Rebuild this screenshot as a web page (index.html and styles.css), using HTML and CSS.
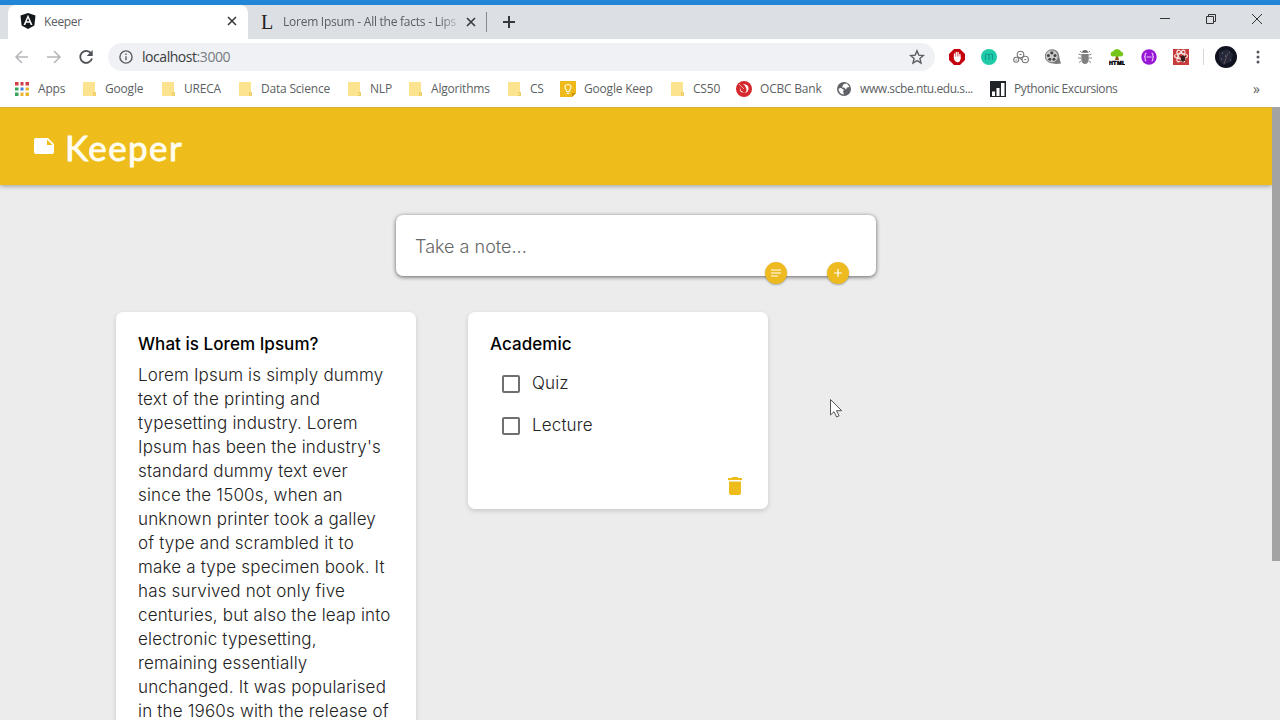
FILE: index.html
```html
<!DOCTYPE html>
<html lang="en">
    <head>
        <meta charset="UTF-8">
        <meta name="viewport" content="width=device-width, initial-scale=1.0">
        <title>Keeper</title>
        <link rel="stylesheet" href="styles.css">
    </head>
    <body>
        <!-- browser window -->
        <div class="tabstrip">
            <div class="tab active">
                <svg class="favicon" viewBox="0 0 16 16"><path d="M8 0l7.5 2.6-1.1 10L8 16l-6.4-3.4-1.1-10z" fill="#15181b"/><path d="M8 1.8L3.5 12h1.8l.9-2.3h3.6l.9 2.3h1.8zm0 3.4l1.3 3.1H6.7z" fill="#fff"/></svg>
                <span class="tab-title">Keeper</span>
                <svg class="close" viewBox="0 0 10 10"><path d="M1 1l8 8M9 1L1 9"/></svg>
            </div>
            <div class="tab second">
                <span class="favicon serif-l">L</span>
                <span class="tab-title fade">Lorem Ipsum - All the facts - Lips</span>
                <svg class="close" viewBox="0 0 10 10"><path d="M1 1l8 8M9 1L1 9"/></svg>
            </div>
            <svg class="new-tab" viewBox="0 0 12 12"><path d="M6 0v12M0 6h12"/></svg>
            <div class="window-buttons">
                <svg width="12" height="12"><path d="M1 5.500h10"/></svg>
                <svg width="12" height="12"><path d="M1.500 3.500h7v7h-7zM3.500 3.500v-2h7v7h-2"/></svg>
                <svg width="12" height="12"><path d="M1 1l10 10M11 1L1 11"/></svg>
            </div>
        </div>

        <div class="toolbar">
            <svg class="nav off" viewBox="0 0 16 16"><path d="M14 8H2M8 2L2 8l6 6"/></svg>
            <svg class="nav off" viewBox="0 0 16 16"><path d="M1 8h13M8 2l6 6-6 6"/></svg>
            <svg class="nav" viewBox="0 0 16 16"><path d="M13.200 4.500A6 6 0 1 0 14 9.500" stroke-width="1.8"/><path d="M14.700 1v6h-6z" class="solid"/></svg>
            <div class="omnibox">
                <svg width="14" height="14"><circle cx="7" cy="7" r="6.100"/><path d="M7 6.300v4M7 3.600v1.400"/></svg>
                <span class="url">localhost<i>:3000</i></span>
                <svg class="star" viewBox="0 0 16 16"><path d="M8 1.800l1.800 4.300 4.600.4-3.500 3 1.100 4.500L8 11.600 4 14l1.100-4.500-3.500-3 4.600-.4z"/></svg>
            </div>
            <div class="extensions">
                <svg viewBox="0 0 16 16"><path d="M5 0h6l5 5v6l-5 5H5l-5-5V5z" fill="#c3000b"/><path d="M5.500 9V5M7.300 8V3.300M9.100 8V3.500M10.900 9.500V5.500" stroke="#fff" stroke-width="1.300" stroke-linecap="round"/><path d="M4.900 7.500h6.600v2.500Q11 13.200 8.800 13.200H8Q6 13.200 4.900 10z" fill="#fff"/></svg>
                <svg viewBox="0 0 16 16"><circle cx="8" cy="8" r="8" fill="#20cbaa"/><path d="M4.500 11V6.500Q4.500 5 6 5t2 1.500V11V6.500Q8 5 10 5t1.500 1.500V11" fill="none" stroke="#11998c" stroke-width="1.100"/></svg>
                <svg viewBox="0 0 16 16" fill="none" stroke="#777" stroke-width="1.100"><circle cx="7.500" cy="5.500" r="3.300"/><circle cx="3.200" cy="10.800" r="2.500"/><circle cx="12.200" cy="10.500" r="3.200"/><path d="M6.500 5.500h2M2.500 11h1.500M11.300 10.500h2M6.500 9l3 2"/></svg>
                <svg viewBox="0 0 16 16"><path d="M7 .5q6-.5 7 6l1 5 1 3-5 .5-5-1z" fill="#777"/><circle cx="6.800" cy="7.300" r="6.500" fill="#ccc" stroke="#777"/><g fill="#444"><circle cx="6.800" cy="3.800" r="1.600"/><circle cx="3.400" cy="6.500" r="1.500"/><circle cx="10" cy="6.500" r="1.500"/><circle cx="4.800" cy="10.300" r="1.500"/><circle cx="8.900" cy="10.300" r="1.500"/></g></svg>
                <svg viewBox="0 0 16 16"><path d="M4.500 3.500L3 2M11.500 3.500L13 2M4 6L1.500 5M12 6l2.500-1M4 9H1M12 9h3M4.500 12L2 13.500M11.500 12l2.500 1.500" stroke="#888" fill="none"/><path d="M5 3.800Q5 1 8 1t3 2.800z" fill="#666"/><path d="M4.300 5h7.400v5.500Q11 15 8 15t-3.700-4.500z" fill="#808080"/></svg>
                <svg viewBox="0 0 16 16"><path d="M7 7h2l1 4H6z" fill="#93521c"/><path d="M8 0q3 0 4 2.500 2.500.5 2.300 3Q13.500 8 11 7.300 8 8 5 7.300 2 8 1.600 5.200 1.700 2.500 4 2.500 5 0 8 0z" fill="#76c51b"/><text x="0" y="15.500" class="html-mark" textLength="16">HTML</text></svg>
                <svg viewBox="0 0 16 16"><circle cx="8" cy="8" r="7.700" fill="#9816d6"/><path d="M5.500 4Q4 4 4.300 6q0 2-1.300 2 1.300 0 1.300 2-.3 2 1.200 2M10.500 4Q12 4 11.700 6q0 2 1.300 2-1.300 0-1.300 2 .3 2-1.200 2M5.500 8h5" fill="none" stroke="#e7c7f7" stroke-width="1.200"/></svg>
                <svg viewBox="0 0 16 16"><path d="M0 0h16v16H0z" fill="#c83a3b"/><g fill="none" stroke="#f5e4e1" stroke-width="1.200"><ellipse cx="8" cy="7" rx="6.500" ry="2.500"/><ellipse cx="8" cy="7" rx="6.500" ry="2.500" transform="rotate(60 8 7)"/><ellipse cx="8" cy="7" rx="6.500" ry="2.500" transform="rotate(120 8 7)"/></g><ellipse cx="10" cy="9.500" rx="2.300" ry="3" fill="#3c1d1c"/><path d="M6.500 6.500l7 6M7 12l6-5M10 6v7.500" stroke="#3c1d1c" stroke-width=".8"/></svg>
            </div>
            <svg class="avatar" viewBox="0 0 22 22"><circle cx="11" cy="11" r="11" fill="#10131f"/><path d="M4 6l8-3 6 5-2 8-8 3-4-5z" fill="#252838"/><path d="M9 18l2-6 2-5" stroke="#62505c" fill="none"/><path d="M7 7h1M14 6h1M15 14h1M10 10h1M6 13h1" stroke="#7a7f98"/></svg>
            <svg class="menu" viewBox="0 0 4 14"><circle cx="2" cy="2" r="1.500"/><circle cx="2" cy="7" r="1.500"/><circle cx="2" cy="12" r="1.500"/></svg>
        </div>

        <svg class="defs">
            <symbol id="folder" viewBox="0 0 16 16"><path d="M2 1h12v10.500l1 .5v3H2z" fill="#fbe38f"/><path d="M12.500 11.500h2v3h-2z" fill="none" stroke="#eccb60"/></symbol>
        </svg>
        <div class="bookmarks">
            <div class="bookmark"><svg viewBox="0 0 16 16"><path d="M1 1h4v4H1zM6 1h4v4H6zM11 1h4v4h-4z" fill="#d33d42"/><path d="M1 6h4v4H1zM1 11h4v4H1z" fill="#38a45b"/><path d="M6 6h4v4H6z" fill="#3c82e5"/><path d="M11 6h4v4h-4zM6 11h4v4H6zM11 11h4v4h-4z" fill="#e8b62e"/><path d="M5.500 0v16M10.500 0v16M0 5.500h16M0 10.500h16" stroke="#fff" stroke-width="2"/></svg>Apps</div>
            <div class="bookmark"><svg><use href="#folder"/></svg>Google</div>
            <div class="bookmark"><svg><use href="#folder"/></svg>URECA</div>
            <div class="bookmark"><svg><use href="#folder"/></svg>Data Science</div>
            <div class="bookmark"><svg><use href="#folder"/></svg>NLP</div>
            <div class="bookmark"><svg><use href="#folder"/></svg>Algorithms</div>
            <div class="bookmark"><svg><use href="#folder"/></svg>CS</div>
            <div class="bookmark"><svg viewBox="0 0 16 16"><path d="M0 0h16v12l-4 4H0z" fill="#edb91b"/><path d="M12 16v-4h4z" fill="#c79008"/><path d="M6.500 10.500V9Q5 8 5 6.300 5 3.500 8 3.500t3 2.800Q11 8 9.500 9v1.500zM6.500 12.300h3" fill="none" stroke="#fff5cf" stroke-width="1.200"/></svg>Google Keep</div>
            <div class="bookmark"><svg><use href="#folder"/></svg>CS50</div>
            <div class="bookmark"><svg viewBox="0 0 16 16"><circle cx="8" cy="8" r="8" fill="#d5292e"/><path d="M7 3q6 .5 5.500 5Q12 12 8 12q3-1 2.500-4Q10 5 7 3zM4 6q0 4 4 5.500Q3 12 4 6z" fill="#fff"/><path d="M3 3l5 5" stroke="#f4a8a8"/></svg>OCBC Bank</div>
            <div class="bookmark tight"><svg viewBox="0 0 16 16"><circle cx="8" cy="8" r="7" fill="#5f6368"/><path d="M2.500 8q2-2 4 0l1.500 1-1 1.500 1 3Q3 13 2.500 8zM8 3l3-.5 2.500 3.500-2.500.5-1 2-2-2H6L7 4z" fill="#fff"/></svg>www.scbe.ntu.edu.s...</div>
            <div class="bookmark tight"><svg viewBox="0 0 16 16"><path d="M0 0h16v16H0z" fill="#202428"/><path d="M2 10.500h3V15H2zM6.500 7h3v8h-3zM11 2h3.500v13H11z" fill="#fff"/></svg>Pythonic Excursions</div>
            <div class="more">»</div>
        </div>

        <!-- page -->
        <div class="viewport">
            <div class="page">
                <header>
                    <svg class="note-icon" viewBox="0 0 20 16"><path d="M2 0h12l6 6v8q0 2-2 2H2q-2 0-2-2V2q0-2 2-2zm11 1.500V7h5.500z"/></svg>
                    <h1>Keeper</h1>
                </header>

                <form class="create-note">
                    <span class="placeholder">Take a note...</span>
                    <button type="button" class="fab text-fab"><svg viewBox="0 0 12 12"><path d="M1 3h10M1 6h10M1 9h7"/></svg></button>
                    <button type="button" class="fab add-fab"><svg viewBox="0 0 12 12"><path d="M6 2v8M2 6h8"/></svg></button>
                </form>

                <main>
                    <article class="note">
                        <h2>What is Lorem Ipsum?</h2>
                        <p>Lorem Ipsum is simply dummy<br>
                        text of the printing and<br>
                        typesetting industry. Lorem<br>
                        Ipsum has been the industry's<br>
                        standard dummy text ever<br>
                        since the 1500s, when an<br>
                        unknown printer took a galley<br>
                        of type and scrambled it to<br>
                        make a type specimen book. It<br>
                        has survived not only five<br>
                        centuries, but also the leap into<br>
                        electronic typesetting,<br>
                        remaining essentially<br>
                        unchanged. It was popularised<br>
                        in the 1960s with the release of</p>
                    </article>
                    <article class="note list">
                        <h2>Academic</h2>
                        <div class="item"><span class="checkbox"></span>Quiz</div>
                        <div class="item"><span class="checkbox"></span>Lecture</div>
                        <svg class="trash" viewBox="0 0 14 18"><path d="M0 1h3.500l1-1h5l1 1H14v2H0zM1 4.500h12V16q0 2-2 2H3q-2 0-2-2z"/></svg>
                    </article>
                </main>
            </div>
            <div class="scrollbar"><div class="thumb"></div></div>
        </div>
        <svg class="cursor" viewBox="0 0 13 19"><path d="M.5.500v15.500l3.500-3.300 2.600 5.300 2.500-1.200-2.600-5.100h5.200z"/></svg>
    </body>
</html>
```
FILE: styles.css
```css
* {
    box-sizing: border-box;
}

body {
    margin: 0;
    height: 720px;
    display: flex;
    flex-direction: column;
    overflow: hidden;
    background: #fff;
    font-family: "Open Sans", "Noto Sans", sans-serif;
}

svg {
    display: block;
    flex: none;
}

.defs {
    display: none;
}

/* tabs */
.tabstrip {
    height: 39px;
    flex: none;
    display: flex;
    align-items: center;
    padding-left: 8px;
    border-top: 5px solid #2086d5;
    background: #dcdfe4;
}

.tab {
    height: 34px;
    display: flex;
    align-items: center;
    padding-bottom: 2px;
    font-size: 12px;
    color: #5a5d61;
}

.tab.active {
    width: 240px;
    padding: 0 11px 2px 12px;
    background: #fff;
    border-radius: 8px 8px 0 0;
}

.tab.second {
    width: 239px;
    height: 20px;
    padding: 0 10px 0 12px;
    margin-bottom: 1px;
    border-right: 1px solid #85888c;
}

.favicon {
    width: 16px;
    height: 16px;
    margin-right: 8px;
    flex: none;
}

.serif-l {
    font: 20px/16px "Liberation Serif", serif;
    color: #222;
    padding-left: 1px;
    margin-right: 7px;
}

.tab-title {
    flex: 1;
    white-space: nowrap;
    letter-spacing: -0.35px;
}

.fade {
    flex: none;
    width: 174px;
    margin-right: 9px;
    letter-spacing: -0.25px;
    -webkit-mask-image: linear-gradient(90deg, #000 90%, rgba(0, 0, 0, 0.25));
    mask-image: linear-gradient(90deg, #000 90%, rgba(0, 0, 0, 0.25));
}

.close {
    width: 10px;
    height: 10px;
    stroke: #36393d;
    stroke-width: 1.6;
}

.new-tab {
    width: 12px;
    height: 12px;
    margin: 0 0 1px 16px;
    stroke: #36393d;
    stroke-width: 2;
}

.window-buttons {
    display: flex;
    gap: 34px;
    margin: -6px 17px 0 auto;
    fill: none;
    stroke: #333;
}

/* address bar */
.toolbar {
    height: 36px;
    flex: none;
    display: flex;
    align-items: center;
    padding: 0 0 1px 14px;
}

.nav {
    width: 16px;
    height: 16px;
    margin-right: 16px;
    fill: none;
    stroke: #4d5156;
    stroke-width: 1.5;
}

.nav.off {
    stroke: #b4b6b9;
}

.nav .solid {
    fill: #4d5156;
    stroke: none;
}

.omnibox {
    width: 827px;
    height: 28px;
    margin-left: -2px;
    padding: 0 10px 0 11px;
    display: flex;
    align-items: center;
    border-radius: 14px;
    background: #eff1f4;
    fill: none;
    stroke: #5a5d61;
    stroke-width: 1.4;
}

.url {
    margin-left: 9px;
    font-size: 14px;
    color: #3a3c40;
    letter-spacing: -0.45px;
}

.url i {
    font-style: normal;
    color: #777b80;
}

.star {
    width: 16px;
    height: 16px;
    margin-left: auto;
}

.extensions {
    width: 255px;
    height: 16px;
    margin-left: 14px;
    display: flex;
    gap: 16px;
    border-right: 1px solid #d4d6d9;
}

.extensions svg {
    width: 16px;
    height: 16px;
}

.html-mark {
    font: 900 5.5px Roboto, sans-serif;
    stroke: #000;
    stroke-width: 0.4;
}

.avatar {
    width: 22px;
    height: 22px;
    margin-left: 11px;
}

.menu {
    width: 4px;
    height: 14px;
    margin-left: 19px;
    fill: #55585c;
}

/* bookmarks bar */
.bookmarks {
    height: 32px;
    flex: none;
    display: grid;
    grid-template-columns: 67px 79px 77px 109px 61px 99px 54px 109px 67px 100px 154px 263px 16px;
    align-items: center;
    padding: 0 0 5px 14px;
    font-size: 12px;
    letter-spacing: -0.2px;
    color: #5c5f63;
    white-space: nowrap;
}

.bookmark {
    display: flex;
    align-items: center;
}

.bookmark.tight {
    letter-spacing: -0.42px;
}

.bookmark svg {
    width: 16px;
    height: 16px;
    margin-right: 8px;
}

.more {
    font-size: 14px;
}

/* keeper */
.viewport {
    flex: 1;
    min-height: 0;
    display: flex;
    overflow: hidden;
    background: #ececec;
}

.page {
    width: 1272px;
    font-family: Inter, sans-serif;
}

.scrollbar {
    width: 8px;
    background: #ececec;
}

.thumb {
    height: 454px;
    background: #a3a3a3;
}

header {
    height: 78px;
    padding-left: 34px;
    display: flex;
    align-items: center;
    background: #eebd1b;
    border-top: 1px solid #d9b33c;
    box-shadow: 0 1px 5px rgba(0, 0, 0, 0.35);
}

.note-icon {
    width: 20px;
    height: 16px;
    margin: 0 11px 2px 0;
    fill: #fff;
}

h1 {
    margin: 0;
    font: 400 35px/50px Lato, sans-serif;
    letter-spacing: 1.4px;
    color: #fffdf0;
    -webkit-text-stroke: 0.8px #fffdf0;
}

.create-note {
    position: relative;
    width: 480px;
    height: 61px;
    margin: 30px auto 36px;
    padding: 1px 19px 0;
    display: flex;
    align-items: center;
    border-radius: 7px;
    background: #fff;
    box-shadow: 0 1px 4px rgba(0, 0, 0, 0.6);
}

.placeholder {
    font-size: 18px;
    font-weight: 300;
    color: #666;
}

.fab {
    position: absolute;
    top: 47px;
    width: 22px;
    height: 22px;
    padding: 5px;
    border: 0;
    border-radius: 50%;
    background: #edbb20;
    box-shadow: 0 1px 2px rgba(0, 0, 0, 0.3);
}

.fab svg {
    width: 12px;
    height: 12px;
    stroke: #fff;
    stroke-width: 1.2;
}

.text-fab {
    left: 369px;
}

.add-fab {
    left: 431px;
}

main {
    display: flex;
    align-items: flex-start;
    gap: 52px;
    padding-left: 116px;
}

.note {
    width: 300px;
    height: 440px;
    padding: 20px 22px;
    border-radius: 7px;
    background: #fff;
    box-shadow: 0 2px 5px rgba(0, 0, 0, 0.15);
    font-size: 17px;
    font-weight: 300;
    line-height: 24px;
    color: #222;
    white-space: nowrap;
}

.note.list {
    height: 197px;
    display: flex;
    flex-direction: column;
}

h2 {
    margin: 0 0 7px;
    font-size: 17px;
    font-weight: 500;
    line-height: 24px;
    letter-spacing: 0.05px;
    color: #000;
}

.note p {
    margin: 0;
    letter-spacing: 0.17px;
}

.item {
    height: 42px;
    padding: 0 0 2px 12px;
    display: flex;
    align-items: center;
    letter-spacing: 0.15px;
}

.checkbox {
    width: 18px;
    height: 18px;
    margin: 2px 12px 0 0;
    border: 2px solid #707070;
    border-radius: 2px;
}

.trash {
    width: 14px;
    height: 18px;
    margin: auto 4px -6px auto;
    fill: #eebd1b;
}

.cursor {
    position: absolute;
    top: 399px;
    left: 830px;
    width: 13px;
    height: 19px;
    fill: #fff;
    stroke: #444;
    stroke-width: 0.9;
}
```
